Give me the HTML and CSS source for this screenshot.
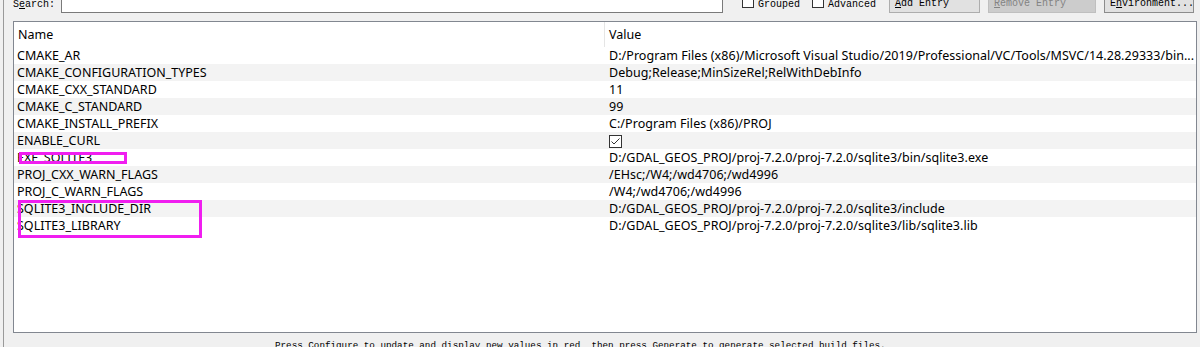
FILE: index.html
```html
<!DOCTYPE html>
<html>
<head>
<meta charset="utf-8">
<link rel="stylesheet" href="styles.css">
</head>
<body>
<div class="app">
  <div class="edge"></div>
  <div class="main">
    <div class="toolbar">
      <span class="tb-label">S<u>e</u>arch:</span>
      <div class="search"></div>
      <span class="cb cb-grouped"></span>
      <span class="tb-text">Grouped</span>
      <span class="cb cb-adv"></span>
      <span class="tb-text">Advanced</span>
      <div class="btn btn-add"><span><u>A</u>dd Entry</span></div>
      <div class="btn btn-remove disabled"><span><u>R</u>emove Entry</span></div>
      <div class="btn btn-env"><span>E<u>n</u>vironment...</span></div>
    </div>
    <div class="panel">
      <div class="grid">
        <div class="hcell hname">Name</div>
        <div class="hcell hvalue">Value</div>

        <div class="cell name">CMAKE_AR</div>
        <div class="cell value">D:/Program Files (x86)/Microsoft Visual Studio/2019/Professional/VC/Tools/MSVC/14.28.29333/bin...</div>

        <div class="cell name alt">CMAKE_CONFIGURATION_TYPES</div>
        <div class="cell value alt">Debug;Release;MinSizeRel;RelWithDebInfo</div>

        <div class="cell name">CMAKE_CXX_STANDARD</div>
        <div class="cell value">11</div>

        <div class="cell name alt">CMAKE_C_STANDARD</div>
        <div class="cell value alt">99</div>

        <div class="cell name">CMAKE_INSTALL_PREFIX</div>
        <div class="cell value">C:/Program Files (x86)/PROJ</div>

        <div class="cell name alt">ENABLE_CURL</div>
        <div class="cell value alt check-cell">
          <svg class="check" width="13" height="13" viewBox="0 0 13 13">
            <rect x="0.5" y="0.5" width="12" height="12" fill="#fff" stroke="#333"/>
            <polyline points="2.5,6.5 5,9 10.5,3.5" fill="none" stroke="#333" stroke-width="1"/>
          </svg>
        </div>

        <div class="cell name">EXE_SQLITE3</div>
        <div class="cell value">D:/GDAL_GEOS_PROJ/proj-7.2.0/proj-7.2.0/sqlite3/bin/sqlite3.exe</div>

        <div class="cell name alt">PROJ_CXX_WARN_FLAGS</div>
        <div class="cell value alt">/EHsc;/W4;/wd4706;/wd4996</div>

        <div class="cell name">PROJ_C_WARN_FLAGS</div>
        <div class="cell value">/W4;/wd4706;/wd4996</div>

        <div class="cell name alt">SQLITE3_INCLUDE_DIR</div>
        <div class="cell value alt">D:/GDAL_GEOS_PROJ/proj-7.2.0/proj-7.2.0/sqlite3/include</div>

        <div class="cell name">SQLITE3_LIBRARY</div>
        <div class="cell value">D:/GDAL_GEOS_PROJ/proj-7.2.0/proj-7.2.0/sqlite3/lib/sqlite3.lib</div>
      </div>
      <div class="mark mark1"></div>
      <div class="mark mark2"></div>
    </div>
    <div class="status">Press Configure to update and display new values in red, then press Generate to generate selected build files.</div>
  </div>
</div>
</body>
</html>
```

FILE: styles.css
```css
html, body {
  margin: 0;
  padding: 0;
}
body {
  width: 1200px;
  height: 347px;
  overflow: hidden;
  background: #f0f0f0;
  font-family: "Noto Sans", "Liberation Sans", sans-serif;
  color: #000;
}
.app {
  display: flex;
  height: 347px;
}
.edge {
  width: 3px;
  border-right: 1px solid #9a9a9a;
  flex: none;
}
.main {
  flex: 1;
  padding-left: 9px;
  display: flex;
  flex-direction: column;
  min-width: 0;
}
.toolbar {
  height: 13px;
  display: flex;
  align-items: flex-end;
  font-family: "Liberation Mono", monospace;
  font-size: 10px;
  flex: none;
}
.tb-label, .tb-text {
  line-height: 10px;
  margin-bottom: 3px;
  white-space: nowrap;
}
.tb-label {
  width: 48px;
}
.search {
  width: 660px;
  height: 20px;
  border: 1px solid #7a7a7a;
  background: #fff;
  flex: none;
}
.cb {
  width: 10px;
  height: 10px;
  border: 1px solid #333;
  background: #fff;
  margin-bottom: 5px;
  flex: none;
}
.cb-grouped { margin-left: 19px; margin-right: 4px; }
.cb-adv { margin-left: 12px; margin-right: 4px; }
.btn {
  height: 20px;
  border: 1px solid #adadad;
  background: #e1e1e1;
  box-sizing: content-box;
  flex: none;
  display: flex;
  align-items: flex-end;
  padding-left: 5px;
  white-space: nowrap;
}
.btn span {
  line-height: 10px;
  margin-bottom: 3px;
}
.btn-add { width: 84px; margin-left: 13px; }
.btn-remove { width: 101px; margin-left: 8px; }
.btn-env { width: 83px; margin-left: 8px; border-color: #8c8c8c; }
.disabled {
  background: #cccccc;
  border-color: #bfbfbf;
  color: #838383;
}
.panel {
  position: relative;
  margin-top: 8px;
  width: 1182px;
  height: 310px;
  border: 1px solid #828790;
  background: #fff;
  flex: none;
}
.grid {
  display: grid;
  grid-template-columns: 590px 1fr;
  font-size: 12.5px;
}
.hcell {
  height: 25px;
  line-height: 26px;
}
.hname { padding-left: 4px; }
.hvalue {
  border-left: 1px solid #e5e5e5;
  padding-left: 4px;
}
.cell {
  height: 16px;
  line-height: 16px;
  padding-top: 1px;
  white-space: nowrap;
  overflow: hidden;
}
.name { padding-left: 3px; }
.value { padding-left: 5px; letter-spacing: 0.05px; }
.alt { background: #f3f3f3; }
.check-cell {
  display: flex;
  align-items: center;
  padding-top: 0;
  height: 17px;
}
.check { display: block; margin-top: 1px; }
.mark {
  position: absolute;
  border: 3px solid #f01ef0;
  box-sizing: border-box;
}
.mark1 {
  left: 5px;
  top: 130px;
  width: 108px;
  height: 12px;
}
.mark2 {
  left: 4px;
  top: 178px;
  width: 184px;
  height: 38px;
}
.status {
  margin-top: 6px;
  padding-left: 262px;
  font-family: "Liberation Mono", monospace;
  font-size: 9.25px;
  line-height: 14px;
  white-space: nowrap;
}
```
